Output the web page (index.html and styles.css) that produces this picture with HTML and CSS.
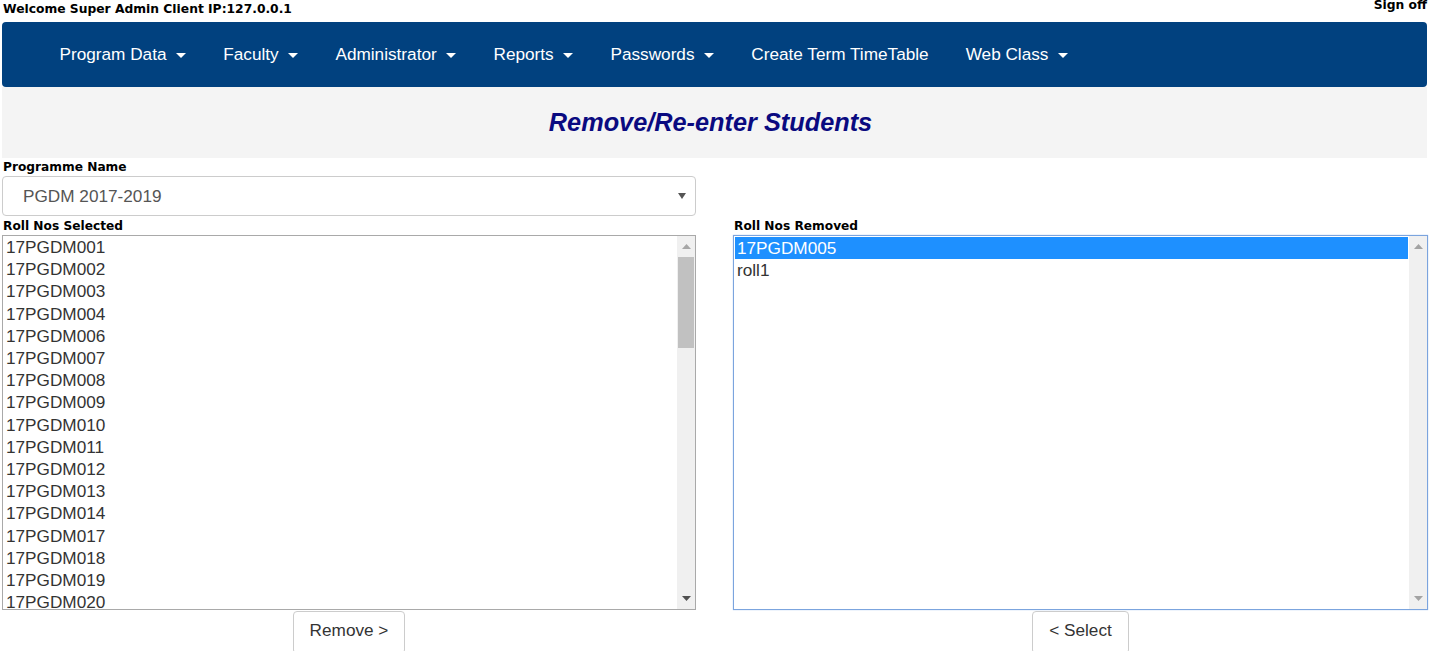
FILE: index.html
```html
<!DOCTYPE html>
<html lang="en">
<head>
    <meta charset="UTF-8">
    <title>Remove/Re-enter Students</title>
    <link rel="stylesheet" href="styles.css">
</head>
<body>
<div class="page">
    <div class="topbar">
        <span class="welcome">Welcome Super Admin Client IP:127.0.0.1</span>
        <a class="signoff" href="#">Sign off</a>
    </div>

    <nav class="navbar">
        <ul class="menu">
            <li><a href="#">Program Data <span class="caret"></span></a></li>
            <li><a href="#">Faculty <span class="caret"></span></a></li>
            <li><a href="#">Administrator <span class="caret"></span></a></li>
            <li><a href="#">Reports <span class="caret"></span></a></li>
            <li><a href="#">Passwords <span class="caret"></span></a></li>
            <li><a href="#">Create Term TimeTable</a></li>
            <li><a href="#">Web Class <span class="caret"></span></a></li>
        </ul>
    </nav>

    <div class="title-band">
        <h2>Remove/Re-enter Students</h2>
    </div>

    <div class="form-grid">
        <div class="col">
            <label>Programme Name</label>
            <div class="select-box">
                <span>PGDM 2017-2019</span>
                <svg width="8" height="6" viewBox="0 0 8 6"><polygon points="0,0 8,0 4,6" fill="#555"/></svg>
            </div>
        </div>
        <div class="col"></div>

        <div class="col">
            <label class="list-label">Roll Nos Selected</label>
            <div class="listbox">
                <div class="options">
                    <div class="opt">17PGDM001</div>
                    <div class="opt">17PGDM002</div>
                    <div class="opt">17PGDM003</div>
                    <div class="opt">17PGDM004</div>
                    <div class="opt">17PGDM006</div>
                    <div class="opt">17PGDM007</div>
                    <div class="opt">17PGDM008</div>
                    <div class="opt">17PGDM009</div>
                    <div class="opt">17PGDM010</div>
                    <div class="opt">17PGDM011</div>
                    <div class="opt">17PGDM012</div>
                    <div class="opt">17PGDM013</div>
                    <div class="opt">17PGDM014</div>
                    <div class="opt">17PGDM017</div>
                    <div class="opt">17PGDM018</div>
                    <div class="opt">17PGDM019</div>
                    <div class="opt">17PGDM020</div>
                </div>
                <div class="scrollbar">
                    <div class="arrow"><svg width="9" height="5" viewBox="0 0 9 5"><polygon points="0,5 9,5 4.5,0" fill="#a6a6a6"/></svg></div>
                    <div class="track"><div class="thumb"></div></div>
                    <div class="arrow"><svg width="9" height="5" viewBox="0 0 9 5"><polygon points="0,0 9,0 4.5,5" fill="#505050"/></svg></div>
                </div>
            </div>
            <div class="actions">
                <button class="btn">Remove &gt;</button>
            </div>
        </div>

        <div class="col">
            <label class="list-label">Roll Nos Removed</label>
            <div class="listbox focused">
                <div class="options">
                    <div class="opt selected">17PGDM005</div>
                    <div class="opt">roll1</div>
                </div>
                <div class="scrollbar">
                    <div class="arrow"><svg width="9" height="5" viewBox="0 0 9 5"><polygon points="0,5 9,5 4.5,0" fill="#a3a3a3"/></svg></div>
                    <div class="track"></div>
                    <div class="arrow"><svg width="9" height="5" viewBox="0 0 9 5"><polygon points="0,0 9,0 4.5,5" fill="#a3a3a3"/></svg></div>
                </div>
            </div>
            <div class="actions">
                <button class="btn">&lt; Select</button>
            </div>
        </div>
    </div>
</div>
</body>
</html>
```

FILE: styles.css
```css
body {
    margin: 0;
    font-family: "Liberation Sans", Arial, sans-serif;
    background-color: white;
    color: #333;
}
.page {
    width: 1425px;
    margin-left: 2px;
}
.topbar {
    display: flex;
    justify-content: space-between;
    align-items: flex-start;
    height: 22px;
    font-family: "DejaVu Sans", Verdana, sans-serif;
    font-size: 12.3px;
    font-weight: bold;
    color: #000;
}
.welcome {
    padding-top: 2px;
    padding-left: 1px;
}
.signoff {
    color: #000;
    text-decoration: none;
    margin-top: -2px;
}
.navbar {
    background-color: #01417f;
    border-radius: 4px;
    height: 65px;
    display: flex;
    align-items: center;
}
.menu {
    list-style: none;
    margin: 0;
    padding: 0 0 0 39px;
    display: flex;
}
.menu a {
    display: block;
    padding: 0 18.5px;
    color: #fff;
    font-size: 17.2px;
    text-decoration: none;
}
.caret {
    display: inline-block;
    width: 0;
    height: 0;
    margin-left: 5px;
    vertical-align: middle;
    border-top: 5px solid #fff;
    border-left: 5px solid transparent;
    border-right: 5px solid transparent;
}
.title-band {
    background-color: #f4f4f4;
    height: 71px;
    display: flex;
    align-items: center;
    justify-content: center;
    padding: 0 8px 1px 0;
    box-sizing: border-box;
}
.title-band h2 {
    margin: 0;
    font-size: 25.3px;
    font-style: italic;
    font-weight: bold;
    color: #0a0a80;
}
.form-grid {
    display: grid;
    grid-template-columns: 694px 695px;
    column-gap: 37px;
}
.col label {
    display: block;
    font-family: "DejaVu Sans", Verdana, sans-serif;
    font-size: 12.2px;
    font-weight: bold;
    line-height: 18px;
    color: #000;
    padding-left: 1px;
}
.col .list-label {
    line-height: 17px;
    padding-top: 2px;
}
.select-box {
    height: 40px;
    box-sizing: border-box;
    border: 1px solid #ccc;
    border-radius: 4px;
    display: flex;
    align-items: center;
    justify-content: space-between;
    padding: 0 9px 0 20px;
    font-size: 17.2px;
    color: #555;
}
.listbox {
    height: 375px;
    box-sizing: border-box;
    border: 1px solid #a9a9a9;
    display: flex;
    background: #fff;
}
.listbox.focused {
    border-color: #7ba4de;
    box-shadow: 0 0 1px #9dbdea;
}
.options {
    flex: 1;
    padding: 0 1px 1px;
    overflow: hidden;
}
.opt {
    font-size: 17.2px;
    line-height: 22.2px;
    padding: 0 2px;
    color: #333;
    white-space: nowrap;
}
.focused .options {
    padding-top: 1px;
}
.opt.selected {
    background-color: #1e90ff;
    color: #fff;
}
.scrollbar {
    width: 18px;
    background-color: #f0f0f0;
    display: flex;
    flex-direction: column;
}
.arrow {
    height: 21px;
    display: flex;
    align-items: center;
    justify-content: center;
}
.track {
    flex: 1;
    padding: 0 1px;
}
.thumb {
    height: 91px;
    background-color: #c1c1c1;
}
.actions {
    display: flex;
    justify-content: center;
    margin-top: 1px;
}
.btn {
    font-family: "Liberation Sans", Arial, sans-serif;
    font-size: 17.2px;
    line-height: 22px;
    color: #333;
    background-color: #fff;
    border: 1px solid #ccc;
    border-radius: 4px;
    padding: 7px 16px 12px;
    cursor: pointer;
}
```
